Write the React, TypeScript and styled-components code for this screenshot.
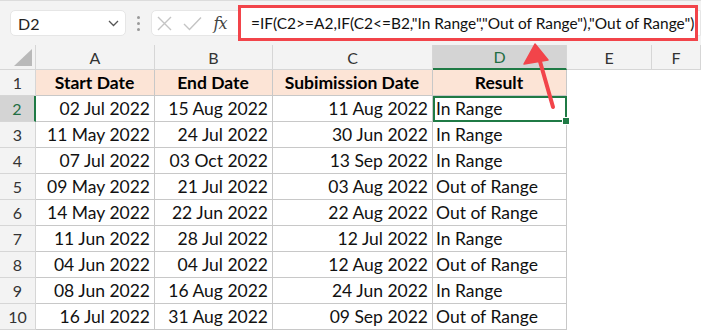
import React from "react";
import styled, { createGlobalStyle, css } from "styled-components";

const Global = createGlobalStyle`
  html, body { margin: 0; padding: 0; background: #ffffff; }
  body { width: 701px; height: 330px; overflow: hidden; font-family: Lato, "Open Sans", sans-serif; }
`;

const Page = styled.div`
  position: relative;
  width: 701px;
  height: 330px;
  overflow: hidden;
  background: #ffffff;
`;

const Toolbar = styled.div`
  height: 45px;
  box-sizing: border-box;
  background: #f3f3f3;
  border-top: 1px solid #dcdcdc;
  display: flex;
  align-items: center;
  padding-left: 10px;
`;

const NameBox = styled.div`
  flex: 0 0 116px;
  height: 26px;
  box-sizing: border-box;
  background: #fff;
  border-radius: 5px;
  border: 1px solid #e6e6e6;
  display: flex;
  align-items: center;
  justify-content: space-between;
  padding: 0 6px 0 7px;
  font-size: 16px;
  color: #222;
`;

const Dots = styled.div`
  flex: 0 0 25px;
  display: flex;
  flex-direction: column;
  align-items: center;
  gap: 3px;
  span { width: 3px; height: 3px; border-radius: 50%; background: #9a9a9a; }
`;

const FormulaBar = styled.div`
  flex: 1 1 auto;
  min-width: 0;
  height: 26px;
  box-sizing: border-box;
  background: #fff;
  border-radius: 5px 0 0 5px;
  border: 1px solid #e6e6e6;
  display: flex;
  align-items: center;
  padding-left: 5px;
`;

const IconSlot = styled.div<{ $w: number; $gap: number }>`
  flex: 0 0 ${(p) => p.$w}px;
  margin-right: ${(p) => p.$gap}px;
  display: flex;
  align-items: center;
  justify-content: center;
`;

const Fx = styled.span`
  font-family: "DejaVu Serif", "Liberation Serif", serif;
  font-style: italic;
  font-size: 16px;
  color: #444;
  letter-spacing: -1px;
`;

const FormulaText = styled.div`
  flex: 1 1 auto;
  min-width: 0;
  overflow: hidden;
  height: 36px;
  margin-right: 2px;
  box-sizing: border-box;
  border: 3px solid #f2444a;
  display: flex;
  align-items: center;
  padding-left: 10px;
  font-size: 15.45px;
  color: #111;
  white-space: nowrap;
  background: #fff;
`;

const Sheet = styled.div`
  display: grid;
  grid-template-columns: 36px 119px 118px 160px 134px 85px 1fr;
  grid-template-rows: 25px repeat(10, 26px);
`;

const ColHead = styled.div<{ $sel?: boolean }>`
  background: #f3f3f3;
  border-right: 1px solid #d6d6d6;
  border-bottom: 1px solid #d6d6d6;
  display: flex;
  align-items: center;
  justify-content: center;
  font-size: 16px;
  color: #333;
  ${(p) =>
    p.$sel &&
    css`
      background: #d4d4d4;
      color: #1f6e43;
      border-bottom: 2px solid #1f7a45;
    `}
`;

const Corner = styled.div`
  background: #f3f3f3;
  border-right: 1px solid #d6d6d6;
  border-bottom: 1px solid #d6d6d6;
  position: relative;
  &::after {
    content: "";
    position: absolute;
    right: 3px;
    bottom: 3px;
    width: 0;
    height: 0;
    border-left: 18px solid transparent;
    border-bottom: 17px solid #b9b9b9;
  }
`;

const RowHead = styled.div<{ $sel?: boolean }>`
  background: #f3f3f3;
  border-right: 1px solid #d6d6d6;
  border-bottom: 1px solid #d6d6d6;
  display: flex;
  align-items: center;
  justify-content: center;
  font-size: 16px;
  color: #333;
  ${(p) =>
    p.$sel &&
    css`
      background: #d4d4d4;
      color: #1f6e43;
      border-right: 2px solid #1f7a45;
    `}
`;

const Cell = styled.div<{ $align: "left" | "right" | "center"; $head?: boolean; $sel?: boolean }>`
  position: relative;
  box-sizing: border-box;
  border-right: 1px solid #c8c8c8;
  border-bottom: 1px solid #c8c8c8;
  display: flex;
  align-items: center;
  padding: 0 4px 0 3px;
  font-size: 17.5px;
  color: #111;
  white-space: nowrap;
  justify-content: ${(p) => (p.$align === "left" ? "flex-start" : p.$align === "right" ? "flex-end" : "center")};
  ${(p) =>
    p.$head &&
    css`
      background: #fce4d6;
      font-weight: 700;
      color: #000;
    `}
  ${(p) =>
    p.$sel &&
    css`
      outline: 2px solid #1f7a45;
      outline-offset: -2px;
      &::after {
        content: "";
        position: absolute;
        right: -4px;
        bottom: -4px;
        width: 6px;
        height: 6px;
        background: #1f7a45;
        border: 1px solid #fff;
        z-index: 2;
      }
    `}
`;

const Empty = styled.div``;

const Arrow = styled.svg`
  position: absolute;
  left: 0;
  top: 0;
  pointer-events: none;
`;

const rows: [string, string, string, string][] = [
  ["02 Jul 2022", "15 Aug 2022", "11 Aug 2022", "In Range"],
  ["11 May 2022", "24 Jul 2022", "30 Jun 2022", "In Range"],
  ["07 Jul 2022", "03 Oct 2022", "13 Sep 2022", "In Range"],
  ["09 May 2022", "21 Jul 2022", "03 Aug 2022", "Out of Range"],
  ["14 May 2022", "22 Jun 2022", "22 Aug 2022", "Out of Range"],
  ["11 Jun 2022", "28 Jul 2022", "12 Jul 2022", "In Range"],
  ["04 Jun 2022", "04 Jul 2022", "12 Aug 2022", "Out of Range"],
  ["08 Jun 2022", "16 Aug 2022", "24 Jun 2022", "In Range"],
  ["16 Jul 2022", "31 Aug 2022", "09 Sep 2022", "Out of Range"],
];

export default function App() {
  return (
    <Page>
      <Global />
      <Toolbar>
        <NameBox>
          <span>D2</span>
          <svg width="11" height="7" viewBox="0 0 11 7">
            <path d="M1 1 L5.5 5.5 L10 1" fill="none" stroke="#555" strokeWidth="1.3" />
          </svg>
        </NameBox>
        <Dots>
          <span />
          <span />
          <span />
        </Dots>
        <FormulaBar>
          <IconSlot $w={15} $gap={11}>
            <svg width="15" height="15" viewBox="0 0 15 15">
              <path d="M1 1 L14 14 M14 1 L1 14" stroke="#c4c4c4" strokeWidth="1.4" />
            </svg>
          </IconSlot>
          <IconSlot $w={19} $gap={10}>
            <svg width="19" height="15" viewBox="0 0 19 15">
              <path d="M1 8 L6.5 13.5 L18 1.5" fill="none" stroke="#c4c4c4" strokeWidth="1.4" />
            </svg>
          </IconSlot>
          <IconSlot $w={16} $gap={10}>
            <Fx>fx</Fx>
          </IconSlot>
          <FormulaText>=IF(C2&gt;=A2,IF(C2&lt;=B2,"In Range","Out of Range"),"Out of Range")</FormulaText>
        </FormulaBar>
      </Toolbar>
      <Sheet>
        <Corner />
        <ColHead>A</ColHead>
        <ColHead>B</ColHead>
        <ColHead>C</ColHead>
        <ColHead $sel>D</ColHead>
        <ColHead>E</ColHead>
        <ColHead>F</ColHead>

        <RowHead>1</RowHead>
        <Cell $align="center" $head>Start Date</Cell>
        <Cell $align="center" $head>End Date</Cell>
        <Cell $align="center" $head>Subimission Date</Cell>
        <Cell $align="center" $head>Result</Cell>
        <Empty />
        <Empty />

        {rows.map((r, i) => (
          <React.Fragment key={i}>
            <RowHead $sel={i === 0}>{i + 2}</RowHead>
            <Cell $align="right">{r[0]}</Cell>
            <Cell $align="right">{r[1]}</Cell>
            <Cell $align="right">{r[2]}</Cell>
            <Cell $align="left" $sel={i === 0}>{r[3]}</Cell>
            <Empty />
            <Empty />
          </React.Fragment>
        ))}
      </Sheet>
      <Arrow width="701" height="330" viewBox="0 0 701 330">
        <line x1="553" y1="107" x2="539" y2="58" stroke="#f2444a" strokeWidth="4" strokeLinecap="round" />
        <polygon points="535,44 524,64 548,60" fill="#f2444a" stroke="#f2444a" strokeWidth="1.5" strokeLinejoin="round" />
      </Arrow>
    </Page>
  );
}
